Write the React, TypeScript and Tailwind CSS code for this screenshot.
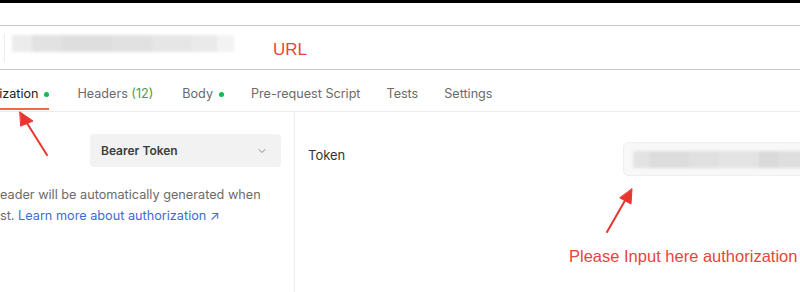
import React from "react";

const ui = { fontFamily: "Inter, 'Noto Sans', sans-serif" };
const note = { fontFamily: "'Liberation Sans', Arial, sans-serif" };

function Blur({ tones, className }: { tones: [number, string][]; className: string }) {
  return (
    <div className={`flex blur-[1.5px] ${className}`}>
      {tones.map(([w, c], i) => (
        <div key={i} style={{ width: w, backgroundColor: c }} className="h-full" />
      ))}
    </div>
  );
}

function Dot() {
  return <span className="inline-block w-[5px] h-[5px] rounded-full bg-[#0cbb52] ml-[6px] mb-[1px]" />;
}

function Tab({ children, active, className = "" }: { children: React.ReactNode; active?: boolean; className?: string }) {
  return (
    <div className={`relative h-full flex items-center pt-[7px] whitespace-nowrap ${className}`}>
      <span className={active ? "text-[#212121]" : "text-[#6b6b6b]"}>{children}</span>
      {active && <div className="absolute left-0 right-0 bottom-[1px] h-[2px] bg-[#f26b3a]" />}
    </div>
  );
}

export default function App() {
  return (
    <div className="relative w-[800px] h-[292px] overflow-hidden bg-white" style={ui}>
      <div className="h-[3px] bg-black" />
      <div className="h-[22px]" />

      {/* url row */}
      <div className="h-[45px] border-y border-[#c9c9c9] flex items-center">
        <div className="ml-[4px] w-px h-[28px] bg-[#ececec]" />
        <Blur
          className="ml-[7px] h-[17px] w-[222px] mt-[-8px]"
          tones={[
            [20, "#ececec"],
            [30, "#e2e2e2"],
            [50, "#dedede"],
            [40, "#e1e1e1"],
            [40, "#e6e6e6"],
            [25, "#eaeaea"],
            [17, "#f3f3f3"],
          ]}
        />
        <span className="ml-[39px] text-[17px] text-[#e8453c] font-light mt-[5px]" style={note}>
          URL
        </span>
      </div>

      {/* tabs */}
      <div className="h-[42px] border-b border-[#ececec] flex text-[12.6px]">
        <Tab active className="ml-[-41px]">
          Authorization<Dot />
        </Tab>
        <Tab className="ml-[28px]">
          Headers <span className="text-[#3f9e58]">(12)</span>
        </Tab>
        <Tab className="ml-[29px]">
          Body<Dot />
        </Tab>
        <Tab className="ml-[27px]">Pre-request Script</Tab>
        <Tab className="ml-[26px]">Tests</Tab>
        <Tab className="ml-[26px]">Settings</Tab>
      </div>

      {/* content */}
      <div className="flex h-[180px]">
        <div className="w-[295px] shrink-0 border-r border-[#ededed]">
          <div className="mt-[22px] ml-[90px] w-[191px] h-[33px] rounded-[4px] bg-[#f2f2f2] flex items-center justify-between pl-[11px] pr-[13px]">
            <span className="text-[12px] font-semibold text-[#3d3d3d]">Bearer Token</span>
            <svg width="12" height="12" viewBox="0 0 24 24" fill="none" stroke="#8a8a8a" strokeWidth="2" strokeLinecap="round" strokeLinejoin="round">
              <path d="m6 9 6 6 6-6" />
            </svg>
          </div>
          <div className="mt-[17px] text-[12.7px] leading-[21px] text-[#6b6b6b] whitespace-nowrap">
            <div>eader will be automatically generated when</div>
            <div>
              st. <span className="text-[#3f6bd1]">Learn more about authorization ↗</span>
            </div>
          </div>
        </div>
        <div className="flex-1 flex items-start">
          <span className="ml-[13px] mt-[34px] text-[13px] text-[#333333]">Token</span>
          <div className="ml-[278px] mt-[30px] h-[34px] flex-1 mr-[-20px] rounded-[5px] bg-[#f8f8f8] border border-[#efefef] flex items-center pl-[9px]">
            <Blur
              className="h-[17px] flex-1"
              tones={[
                [16, "#e3e3e3"],
                [40, "#dcdcdc"],
                [30, "#e0e0e0"],
                [40, "#e3e3e3"],
                [20, "#dadada"],
                [60, "#dedede"],
              ]}
            />
          </div>
        </div>
      </div>

      {/* annotations */}
      <svg className="absolute left-0 top-0" width="800" height="292" viewBox="0 0 800 292">
        <g stroke="#e8352e" strokeWidth="2" strokeLinecap="round" fill="#e8352e">
          <line x1="47" y1="155" x2="25" y2="120" />
          <path d="M20 112 L33 121 L21 126 Z" strokeWidth="1" strokeLinejoin="round" />
          <line x1="607" y1="232" x2="627" y2="197" />
          <path d="M632 189 L631 204 L620 198 Z" strokeWidth="1" strokeLinejoin="round" />
        </g>
      </svg>
      <div className="absolute left-[569px] top-[244px] text-[16.5px] text-[#e5453f] whitespace-nowrap" style={note}>
        Please Input here authorization Token
      </div>
    </div>
  );
}
